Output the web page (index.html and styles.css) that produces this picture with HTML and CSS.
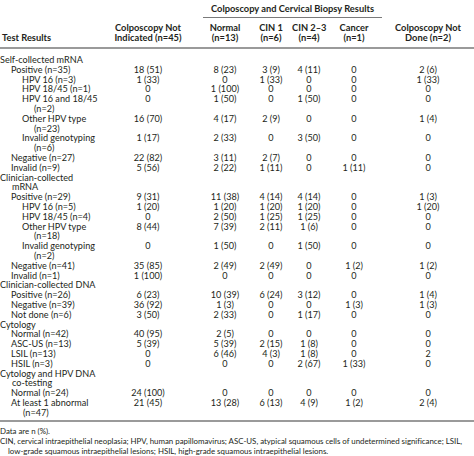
FILE: index.html
```html
<!DOCTYPE html>
<html>
<head>
<meta charset="utf-8">
<link rel="stylesheet" href="styles.css">
</head>
<body>
<table class="tbl">
<colgroup>
<col class="w1"><col class="w2"><col class="w3"><col class="w4"><col class="w5"><col class="w6"><col class="w7">
</colgroup>
<thead>
<tr class="top">
<th></th><th></th>
<th colspan="4" class="span pl"><div class="spanrule">Colposcopy and Cervical Biopsy Results</div></th>
<th></th>
</tr>
<tr class="hdr">
<th class="lab">Test Results</th>
<th>Colposcopy Not<br>Indicated (n=45)</th>
<th class="pl">Normal<br>(n=13)</th>
<th>CIN 1<br>(n=6)</th>
<th>CIN 2–3<br>(n=4)</th>
<th>Cancer<br>(n=1)</th>
<th>Colposcopy Not<br>Done (n=2)</th>
</tr>
</thead>
<tbody>
<tr class="first"><td class="lab l0">Self-collected mRNA</td><td></td><td class="pl"></td><td></td><td></td><td></td><td></td></tr>
<tr><td class="lab l1">Positive (n=35)</td><td>18 (51)</td><td class="pl">8 (23)</td><td>3 (9)</td><td>4 (11)</td><td>0</td><td>2 (6)</td></tr>
<tr><td class="lab l2">HPV 16 (n=3)</td><td>1 (33)</td><td class="pl">0</td><td>1 (33)</td><td>0</td><td>0</td><td>1 (33)</td></tr>
<tr><td class="lab l2">HPV 18/45 (n=1)</td><td>0</td><td class="pl">1 (100)</td><td>0</td><td>0</td><td>0</td><td>0</td></tr>
<tr><td class="lab l2">HPV 16 and 18/45<br>(n=2)</td><td>0</td><td class="pl">1 (50)</td><td>0</td><td>1 (50)</td><td>0</td><td>0</td></tr>
<tr><td class="lab l2">Other HPV type<br>(n=23)</td><td>16 (70)</td><td class="pl">4 (17)</td><td>2 (9)</td><td>0</td><td>0</td><td>1 (4)</td></tr>
<tr><td class="lab l2">Invalid genotyping<br>(n=6)</td><td>1 (17)</td><td class="pl">2 (33)</td><td>0</td><td>3 (50)</td><td>0</td><td>0</td></tr>
<tr><td class="lab l1">Negative (n=27)</td><td>22 (82)</td><td class="pl">3 (11)</td><td>2 (7)</td><td>0</td><td>0</td><td>0</td></tr>
<tr><td class="lab l1">Invalid (n=9)</td><td>5 (56)</td><td class="pl">2 (22)</td><td>1 (11)</td><td>0</td><td>1 (11)</td><td>0</td></tr>
<tr><td class="lab l0">Clinician-collected<br>mRNA</td><td></td><td class="pl"></td><td></td><td></td><td></td><td></td></tr>
<tr><td class="lab l1">Positive (n=29)</td><td>9 (31)</td><td class="pl">11 (38)</td><td>4 (14)</td><td>4 (14)</td><td>0</td><td>1 (3)</td></tr>
<tr><td class="lab l2">HPV 16 (n=5)</td><td>1 (20)</td><td class="pl">1 (20)</td><td>1 (20)</td><td>1 (20)</td><td>0</td><td>1 (20)</td></tr>
<tr><td class="lab l2">HPV 18/45 (n=4)</td><td>0</td><td class="pl">2 (50)</td><td>1 (25)</td><td>1 (25)</td><td>0</td><td>0</td></tr>
<tr><td class="lab l2">Other HPV type<br>(n=18)</td><td>8 (44)</td><td class="pl">7 (39)</td><td>2 (11)</td><td>1 (6)</td><td>0</td><td>0</td></tr>
<tr><td class="lab l2">Invalid genotyping<br>(n=2)</td><td>0</td><td class="pl">1 (50)</td><td>0</td><td>1 (50)</td><td>0</td><td>0</td></tr>
<tr><td class="lab l1">Negative (n=41)</td><td>35 (85)</td><td class="pl">2 (49)</td><td>2 (49)</td><td>0</td><td>1 (2)</td><td>1 (2)</td></tr>
<tr><td class="lab l1">Invalid (n=1)</td><td>1 (100)</td><td class="pl">0</td><td>0</td><td>0</td><td>0</td><td>0</td></tr>
<tr><td class="lab l0">Clinician-collected DNA</td><td></td><td class="pl"></td><td></td><td></td><td></td><td></td></tr>
<tr><td class="lab l1">Positive (n=26)</td><td>6 (23)</td><td class="pl">10 (39)</td><td>6 (24)</td><td>3 (12)</td><td>0</td><td>1 (4)</td></tr>
<tr><td class="lab l1">Negative (n=39)</td><td>36 (92)</td><td class="pl">1 (3)</td><td>0</td><td>0</td><td>1 (3)</td><td>1 (3)</td></tr>
<tr><td class="lab l1">Not done (n=6)</td><td>3 (50)</td><td class="pl">2 (33)</td><td>0</td><td>1 (17)</td><td>0</td><td>0</td></tr>
<tr><td class="lab l0">Cytology</td><td></td><td class="pl"></td><td></td><td></td><td></td><td></td></tr>
<tr><td class="lab l1">Normal (n=42)</td><td>40 (95)</td><td class="pl">2 (5)</td><td>0</td><td>0</td><td>0</td><td>0</td></tr>
<tr><td class="lab l1">ASC-US (n=13)</td><td>5 (39)</td><td class="pl">5 (39)</td><td>2 (15)</td><td>1 (8)</td><td>0</td><td>0</td></tr>
<tr><td class="lab l1">LSIL (n=13)</td><td>0</td><td class="pl">6 (46)</td><td>4 (3)</td><td>1 (8)</td><td>0</td><td>2</td></tr>
<tr><td class="lab l1">HSIL (n=3)</td><td>0</td><td class="pl">0</td><td>0</td><td>2 (67)</td><td>1 (33)</td><td>0</td></tr>
<tr><td class="lab l0">Cytology and HPV DNA<br>co-testing</td><td></td><td class="pl"></td><td></td><td></td><td></td><td></td></tr>
<tr><td class="lab l1">Normal (n=24)</td><td>24 (100)</td><td class="pl">0</td><td>0</td><td>0</td><td>0</td><td>0</td></tr>
<tr class="last"><td class="lab l1">At least 1 abnormal<br>(n=47)</td><td>21 (45)</td><td class="pl">13 (28)</td><td>6 (13)</td><td>4 (9)</td><td>1 (2)</td><td>2 (4)</td></tr>
</tbody>
</table>
<div class="notes">
<p class="note">Data are n (%).</p>
<p class="note">CIN, cervical intraepithelial neoplasia; HPV, human papillomavirus; ASC-US, atypical squamous cells of undetermined significance; LSIL,<br>low-grade squamous intraepithelial lesions; HSIL, high-grade squamous intraepithelial lesions.</p>
</div>
</body>
</html>
```
FILE: styles.css
```css
html, body {
  margin: 0;
  padding: 0;
  background: #ffffff;
}
body {
  width: 474px;
  font-family: Lato, "Open Sans", "Liberation Sans", sans-serif;
  color: #231f20;
}
.tbl {
  width: 474px;
  border-collapse: collapse;
  table-layout: fixed;
}
.w1 { width: 108px; }
.w2 { width: 80px; }
.w3 { width: 62px; }
.w4 { width: 42px; }
.w5 { width: 34px; }
.w6 { width: 56px; }
.w7 { width: 92px; }
.tbl th, .tbl td {
  padding: 0;
  vertical-align: top;
  text-align: center;
  font-size: 9.1px;
  line-height: 9.8px;
  white-space: nowrap;
}
.tbl th {
  font-weight: 700;
  font-size: 9.3px;
  line-height: 10px;
}
.tbl .pl {
  padding-left: 12px;
}
.top th {
  padding-top: 4px;
}
.spanrule {
  margin-left: 3px;
  padding-bottom: 3px;
  border-bottom: 1px solid #7a7a7a;
}
.hdr th {
  padding-top: 5px;
  padding-bottom: 4px;
  vertical-align: bottom;
  border-bottom: 2px solid #9a9a9a;
}
.tbl .lab {
  text-align: left;
}
.hdr th.lab {
  padding-left: 2px;
}
.tbl td.l0 { padding-left: 12px; text-indent: -12px; }
.tbl td.l1 { padding-left: 23px; text-indent: -12px; }
.tbl td.l2 { padding-left: 34px; text-indent: -12px; }
.first td {
  padding-top: 6px;
}
.last td {
  padding-bottom: 3px;
  border-bottom: 2px solid #9a9a9a;
}
.notes {
  padding-top: 4px;
}
.note {
  margin: 0;
  padding-left: 8px;
  text-indent: -8px;
  font-size: 7.9px;
  letter-spacing: -0.02px;
  line-height: 10px;
  white-space: nowrap;
}
```
